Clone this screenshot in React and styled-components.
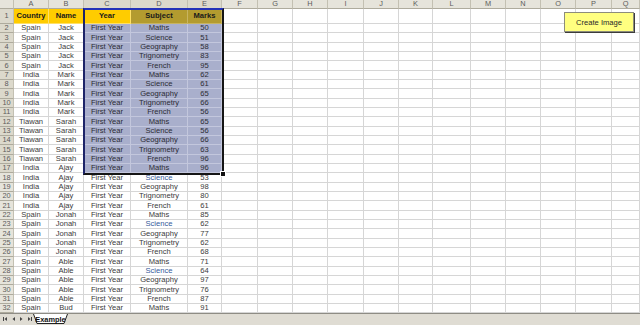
import React from 'react'
import styled, { createGlobalStyle } from 'styled-components'

const GlobalStyle = createGlobalStyle`
  html, body {
    margin: 0;
    padding: 0;
    background: #fff;
    overflow: hidden;
  }
  body {
    font-family: "Liberation Sans", Arial, sans-serif;
  }
`

const LETTERS = 'ABCDEFGHIJKLMNOPQ'.split('')
const WIDTHS = [35, 35, 47, 57, 34, 36, 35, 35, 36, 35, 34, 38, 35, 35, 35, 36]

const PEOPLE = [
  ['Spain', 'Jack'],
  ['India', 'Mark'],
  ['Tiawan', 'Sarah'],
  ['India', 'Ajay'],
  ['Spain', 'Jonah'],
  ['Spain', 'Able'],
]
const SUBJECTS = ['Maths', 'Science', 'Geography', 'Trignometry', 'French']
const MARKS = [
  50, 51, 58, 83, 95,
  62, 61, 65, 66, 56,
  65, 56, 66, 63, 96,
  96, 53, 98, 80, 61,
  85, 62, 77, 62, 68,
  71, 64, 97, 76, 87,
  91,
]

const rows = MARKS.map((mark, i) => {
  const person = i === 30 ? ['Spain', 'Bud'] : PEOPLE[Math.floor(i / 5)]
  return [person[0], person[1], 'First Year', SUBJECTS[i % 5], String(mark)]
})

// header 9px, title row 15px, then data rows averaging 9.33px
const rowHeights = [9, 15]
for (let i = 0; i < 31; i++) {
  rowHeights.push(Math.round(24 + (i + 1) * 28 / 3) - Math.round(24 + i * 28 / 3))
}

const Page = styled.div`
  width: 640px;
  height: 325px;
  display: flex;
  flex-direction: column;
  position: relative;
  overflow: hidden;
  font-family: "Liberation Sans", Arial, sans-serif;
`

const Sheet = styled.div`
  display: grid;
  grid-template-columns: 14px ${WIDTHS.map(w => `${w}px`).join(' ')} 1fr;
  grid-template-rows: ${p => p.$rows};
  position: relative;
`

const HeadCell = styled.div`
  display: flex;
  align-items: center;
  justify-content: center;
  background: ${p => (p.$hot ? '#dcd9cc' : '#e6e4db')};
  border-right: 1px solid #c3c0b2;
  border-bottom: 1px solid #aeab9d;
  color: #5c5c5c;
  font-size: 7.4px;
  line-height: 1;
  overflow: hidden;
`

const Cell = styled.div`
  display: flex;
  align-items: center;
  justify-content: center;
  background: ${p => p.$bg};
  border-right: 1px solid ${p => p.$line};
  border-bottom: 1px solid ${p => p.$line};
  color: ${p => p.$color};
  font-size: 7.6px;
  font-weight: ${p => (p.$bold ? 700 : 400)};
  line-height: 1;
  white-space: nowrap;
  overflow: hidden;
`

const Selection = styled.div`
  position: absolute;
  left: 83px;
  top: 8px;
  width: 141px;
  height: 167px;
  box-sizing: border-box;
  border: 2px solid #151515;
  border-top-color: #2432b8;
  border-left-color: #1c2468;
  pointer-events: none;
`

const FillHandle = styled.div`
  position: absolute;
  right: -4px;
  bottom: -4px;
  width: 4px;
  height: 4px;
  background: #111;
  border: 1px solid #fff;
`

const CreateButton = styled.button`
  position: absolute;
  left: 564px;
  top: 12px;
  width: 70px;
  height: 20px;
  padding: 0;
  background: #ffff80;
  border: 1px solid #8c8c7c;
  box-shadow: 1px 1px 0 #3c3c3c;
  color: #2a2a2a;
  font-family: "Liberation Sans", Arial, sans-serif;
  font-size: 7.6px;
`

const TabBar = styled.div`
  flex: 1;
  display: flex;
  align-items: flex-start;
  background: #dfdcd3;
  border-top: 1px solid #8e8c84;
`

const Nav = styled.div`
  display: flex;
  align-items: center;
  gap: 3px;
  padding: 2px 0 0 3px;
  width: 30px;
`

const Tab = styled.div`
  position: relative;
  width: 35px;
  height: 10px;
  display: flex;
  justify-content: center;
  align-items: center;
  font-size: 7.4px;
  font-weight: 700;
  color: #111;
  svg {
    position: absolute;
    inset: 0;
  }
  span {
    position: relative;
  }
`

const Arrow = ({ dir, bar }) => (
  <svg width="5" height="6" viewBox="0 0 5 6">
    {dir === 'left' ? <path d="M4 1 L1.5 3 L4 5 Z" fill="#444" /> : <path d="M1 1 L3.5 3 L1 5 Z" fill="#444" />}
    {bar && dir === 'left' && <rect x="0" y="1" width="1" height="4" fill="#444" />}
    {bar && dir === 'right' && <rect x="4" y="1" width="1" height="4" fill="#444" />}
  </svg>
)

const App = () => {
  const cells = []

  cells.push(<HeadCell key="corner" />)
  LETTERS.forEach((l, c) => {
    cells.push(<HeadCell key={`h${l}`} $hot={c >= 2 && c <= 4}>{l}</HeadCell>)
  })

  const titles = ['Country', 'Name', 'Year', 'Subject', 'Marks']
  const allRows = [titles, ...rows]

  allRows.forEach((row, r) => {
    const rowNo = r + 1
    cells.push(<HeadCell key={`r${rowNo}`} $hot={rowNo <= 17}>{rowNo}</HeadCell>)
    LETTERS.forEach((l, c) => {
      const text = c < 5 ? row[c] : ''
      const inSel = rowNo <= 17 && c >= 2 && c <= 4
      const active = rowNo === 1 && c === 2
      let bg = '#fff'
      let line = '#d6d6d6'
      let color = '#3a3a3a'
      if (rowNo === 1 && c < 5) {
        bg = inSel && !active ? '#b39b2f' : '#ffcc00'
        line = inSel && !active ? '#c8b460' : '#ffe066'
        color = '#1a1a1a'
      } else if (inSel) {
        bg = '#a9afcc'
        line = '#c3c7dd'
        color = '#2c2c34'
      } else if (text === 'Science') {
        color = '#34599a'
      }
      cells.push(
        <Cell key={`${l}${rowNo}`} $bg={bg} $line={line} $color={color} $bold={rowNo === 1}>
          {text}
        </Cell>
      )
    })
  })

  return (
    <>
      <GlobalStyle />
      <Page>
        <Sheet $rows={rowHeights.map(h => `${h}px`).join(' ')}>
          {cells}
          <Selection>
            <FillHandle />
          </Selection>
        </Sheet>
        <CreateButton>Create Image</CreateButton>
        <TabBar>
          <Nav>
            <Arrow dir="left" bar />
            <Arrow dir="left" />
            <Arrow dir="right" />
            <Arrow dir="right" bar />
          </Nav>
          <Tab>
            <svg width="35" height="10" viewBox="0 0 35 10">
              <path d="M0.5 0 L4 9.5 L31 9.5 L34.5 0" fill="#fff" stroke="#222" strokeWidth="1" />
            </svg>
            <span>Example</span>
          </Tab>
        </TabBar>
      </Page>
    </>
  )
}

export default App
